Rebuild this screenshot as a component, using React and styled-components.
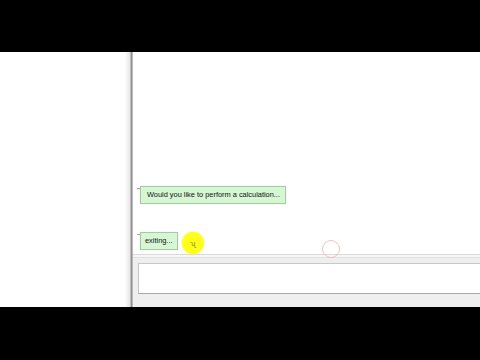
import React from "react";
import styled, { createGlobalStyle } from "styled-components";

const Global = createGlobalStyle`
  html, body { margin: 0; padding: 0; background: #000; }
  body { font-family: "Liberation Sans", Arial, sans-serif; }
`;

const Frame = styled.div`
  width: 480px;
  height: 360px;
  background: #000;
  display: flex;
  flex-direction: column;
  overflow: hidden;
`;

const Bar = styled.div`
  height: ${(p) => p.h}px;
  flex: none;
  background: #000;
`;

const Window = styled.div`
  height: 255px;
  flex: none;
  display: flex;
  background: #fff;
`;

const LeftPane = styled.div`
  width: 125px;
  flex: none;
  background: #fff;
`;

const Divider = styled.div`
  width: 8px;
  flex: none;
  background: linear-gradient(to right, #fff 0px, #f3f3f3 2px, #e6e6e6 5px, #9a9a9a 6px, #8a8a8a 7px, #e8e8e8 8px);
`;

const RightPane = styled.div`
  flex: 1;
  display: flex;
  flex-direction: column;
  position: relative;
`;

const Chat = styled.div`
  flex: 1;
  display: flex;
  flex-direction: column;
  justify-content: flex-end;
  padding: 0 0 4px 7px;
  gap: 28px;
`;

const Bubble = styled.div`
  position: relative;
  align-self: flex-start;
  background: #d6f7d4;
  border: 1px solid #a9c9a6;
  color: #111;
  font-size: 7.4px;
  line-height: 16px;
  padding: 0 ${(p) => p.pr}px 0 ${(p) => p.pl}px;
  box-shadow: 0 0 1px #c8e6c6;
  &::before {
    content: "";
    position: absolute;
    left: -4px;
    top: 1px;
    width: 3px;
    height: 1px;
    background: #8fae8c;
  }
`;

const InputArea = styled.div`
  height: 53px;
  flex: none;
  background: #efefef;
  border-top: 1px solid #dadada;
  box-shadow: inset 0 2px 0 #f7f7f7, inset 0 3px 0 #e0e0e0;
  padding: 8px 0 0 5px;
  box-sizing: border-box;
`;

const Input = styled.div`
  height: 31px;
  background: #fff;
  border: 1px solid #c8c8c8;
  border-bottom-color: #a8a8a8;
  border-right: none;
  box-sizing: border-box;
`;

const Highlight = styled.div`
  position: absolute;
  left: ${(p) => p.x}px;
  top: ${(p) => p.y}px;
  width: 22px;
  height: 22px;
  border-radius: 50%;
  background: #ffff1a;
  box-shadow: 0 0 2px #f5f060;
  display: flex;
  align-items: center;
  justify-content: center;
  font-size: 7px;
  color: #8a7a20;
`;

const Ring = styled.div`
  position: absolute;
  left: ${(p) => p.x}px;
  top: ${(p) => p.y}px;
  width: 18px;
  height: 18px;
  border-radius: 50%;
  border: 1.5px solid #ebc4c2;
  box-sizing: border-box;
`;

export default function App() {
  return (
    <>
      <Global />
      <Frame>
        <Bar h={52} />
        <Window>
          <LeftPane />
          <Divider />
          <RightPane>
            <Chat>
              <Bubble pl={6} pr={5}>Would you like to perform a calculation...</Bubble>
              <Bubble pl={4} pr={4}>exiting...</Bubble>
            </Chat>
            <InputArea>
              <Input />
            </InputArea>
            <Highlight x={49} y={180}>ʯ</Highlight>
            <Ring x={189} y={188} />
          </RightPane>
        </Window>
        <Bar h={53} />
      </Frame>
    </>
  );
}
